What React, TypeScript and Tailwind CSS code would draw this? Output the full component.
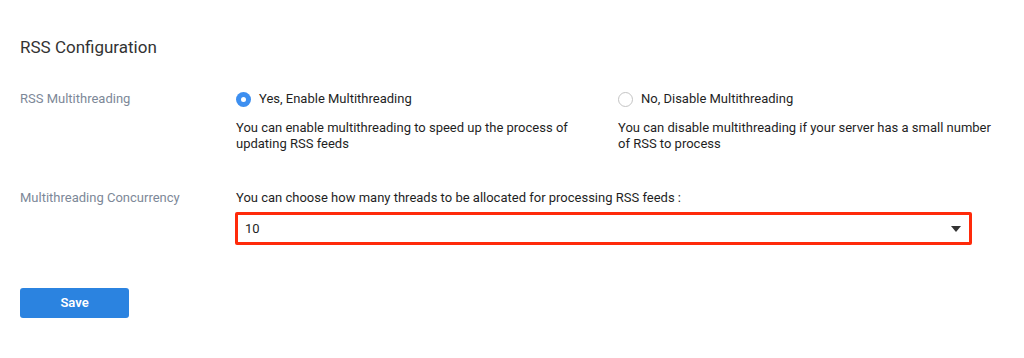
import React from 'react';

const Radio = ({ checked }: { checked: boolean }) =>
  checked ? (
    <span className="flex h-[15px] w-[15px] items-center justify-center rounded-full bg-[#3d8ff0]">
      <span className="h-[5px] w-[5px] rounded-full bg-white" />
    </span>
  ) : (
    <span className="h-[15px] w-[15px] rounded-full border border-[#c4c4c4] bg-white" />
  );

const App = () => {
  const options = [
    {
      label: 'Yes, Enable Multithreading',
      checked: true,
      desc: 'You can enable multithreading to speed up the process of updating RSS feeds',
      width: 'w-[382px]',
    },
    {
      label: 'No, Disable Multithreading',
      checked: false,
      desc: 'You can disable multithreading if your server has a small number of RSS to process',
      width: 'w-[390px]',
    },
  ];

  return (
    <div className="h-[358px] w-[1024px] bg-white pl-[20px] pt-[37px] font-['Roboto',sans-serif] text-[13px] leading-[16px] text-[#1f1f1f]">
      <h1 className="text-[17px] leading-[21px] text-[#333]">RSS Configuration</h1>

      <div className="mt-[33px] flex">
        <div className="w-[216px] text-[#7d8898]">RSS Multithreading</div>
        <div className="flex">
          {options.map((o) => (
            <div key={o.label} className={o.width}>
              <label className="flex h-[16px] items-center gap-[8px]">
                <Radio checked={o.checked} />
                <span>{o.label}</span>
              </label>
              <p className="mt-[13px] w-[380px] pr-[6px]">{o.desc}</p>
            </div>
          ))}
        </div>
      </div>

      <div className="mt-[38px] flex">
        <div className="w-[216px] text-[#7d8898]">Multithreading Concurrency</div>
        <div>
          <p>You can choose how many threads to be allocated for processing RSS feeds :</p>
          <div className="ml-[-1px] mt-[6px] flex h-[33px] w-[737px] items-center justify-between rounded-[2px] border-[3px] border-[#ff2a0a] pl-[7px] pr-[8px]">
            <span>10</span>
            <svg width="10" height="6" viewBox="0 0 10 6">
              <path d="M0 0h10L5 6z" fill="#333" />
            </svg>
          </div>
        </div>
      </div>

      <button className="mt-[43px] h-[30px] w-[109px] rounded-[3px] bg-[#2b83e0] text-[13px] font-semibold text-white">
        Save
      </button>
    </div>
  );
};

export default App;
